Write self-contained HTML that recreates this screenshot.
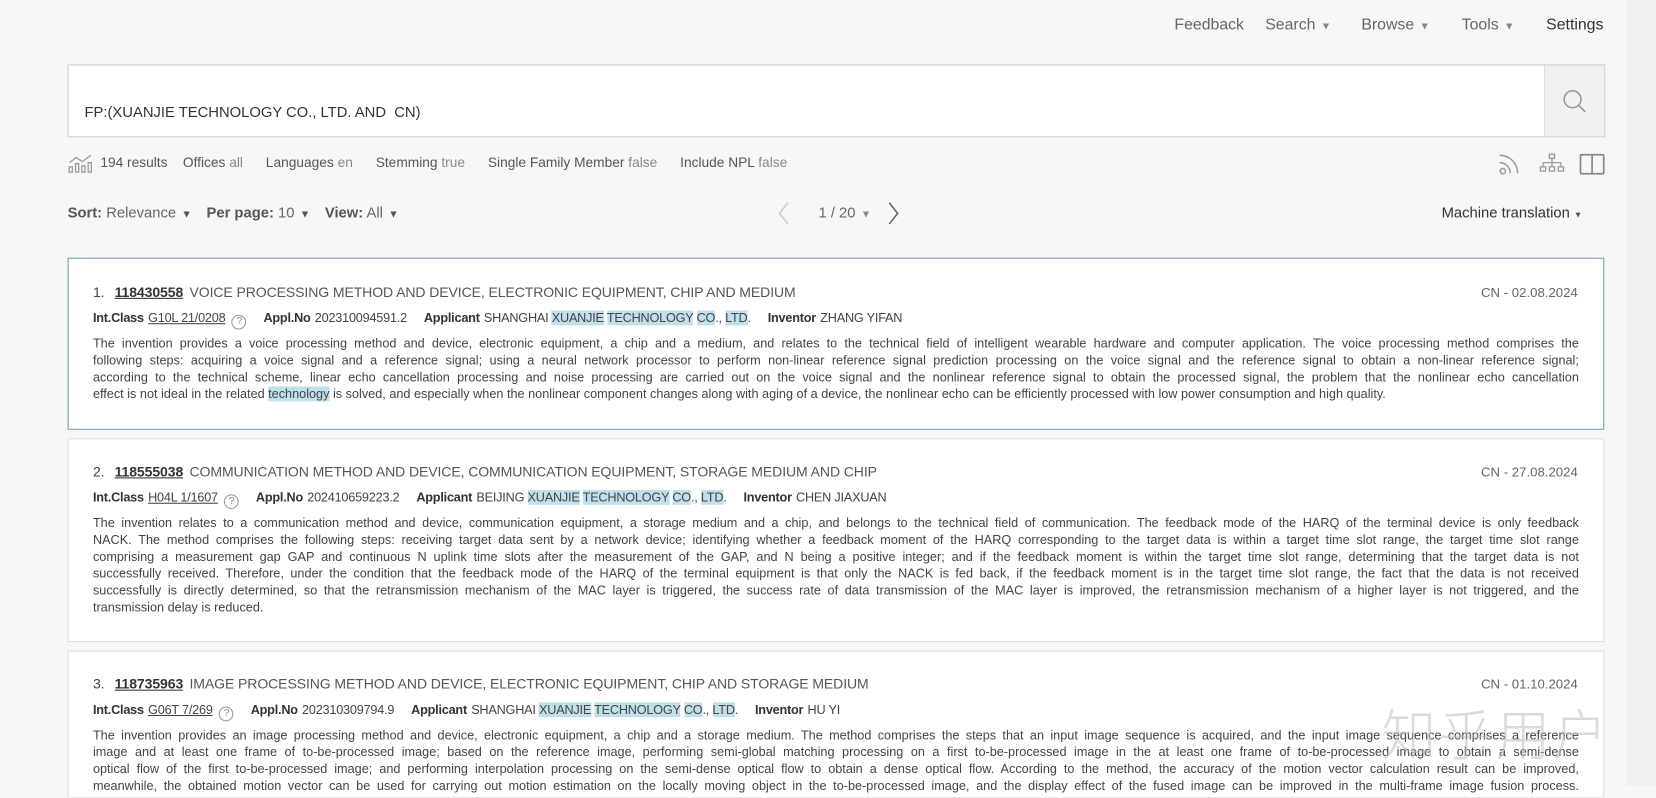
<!DOCTYPE html>
<html><head><meta charset="utf-8"><style>
*{margin:0;padding:0;box-sizing:border-box}
html,body{width:1656px;height:786px;overflow:hidden;background:#f7f7f7}
#w{position:absolute;left:0;top:0;width:1568px;height:744px;transform:scale(1.05612);transform-origin:0 0;font-family:"Liberation Sans Narrow","Liberation Sans",sans-serif;color:#555}
.a{position:absolute;white-space:nowrap}
.nav{top:15px;font-size:15px;color:#666}
.tri{font-size:10px;color:#888;margin-left:5px}
.card{position:absolute;left:64px;width:1455px;background:#fff;border:1px solid #ddd}
.t{position:absolute;left:23px;font-size:13.3px;color:#555;white-space:nowrap;letter-spacing:-0.1px}
.t b{color:#444;font-weight:normal;margin-right:6px}
.t u{color:#333;font-weight:bold;margin-right:6px}
.d{position:absolute;right:24px;font-size:12.5px;color:#666}
.m{position:absolute;left:23px;font-size:12px;color:#444;white-space:nowrap;letter-spacing:-0.2px}
.m .k{color:#333;font-weight:bold;margin-left:16px;margin-right:4px}
.m .k:first-child{margin-left:0}
.q{display:inline-block;width:14px;height:14px;border:1px solid #999;border-radius:50%;font-size:10px;text-align:center;line-height:12px;color:#888;margin-left:6px;vertical-align:-2px}
.h{background:#bfe0ec}
.b{position:absolute;left:23px;width:1407px;font-size:12px;color:#444}
.b div{height:16px;line-height:16px;overflow:hidden;text-align:justify;text-align-last:justify}
.b div.l{text-align-last:left}
</style></head><body><div id="w">
<div class="a nav" style="left:1112px">Feedback</div>
<div class="a nav" style="left:1198px">Search<span class="tri">▼</span></div>
<div class="a nav" style="left:1289px">Browse<span class="tri">▼</span></div>
<div class="a nav" style="left:1384px">Tools<span class="tri">▼</span></div>
<div class="a nav" style="left:1464px;color:#333">Settings</div>

<div style="position:absolute;left:64px;top:61px;width:1456px;height:69px;background:#fff;border:1px solid #ccc"></div>
<div style="position:absolute;left:1462px;top:62px;width:57px;height:67px;background:#f1f1f1;border-left:1px solid #ddd"></div>
<svg style="position:absolute;left:1478px;top:83px" width="26" height="26" viewBox="0 0 26 26"><circle cx="11" cy="11" r="8" fill="none" stroke="#999" stroke-width="1.5"/><path d="M17 17 L23 23" stroke="#999" stroke-width="1.5"/></svg>
<div class="a" style="left:80px;top:98px;font-size:14px;color:#333">FP:(XUANJIE TECHNOLOGY CO., LTD. AND&nbsp; CN)</div>

<svg style="position:absolute;left:64px;top:145px" width="26" height="20" viewBox="0 0 26 20"><g fill="none" stroke="#999" stroke-width="1.2"><path d="M2 9 L8 4 L14 8 L22 2"/><rect x="1.5" y="13" width="3" height="5"/><rect x="7.5" y="10" width="3" height="8"/><rect x="13.5" y="12" width="3" height="6"/><rect x="19.5" y="9" width="3" height="9"/></g></svg>
<div class="a" style="left:95px;top:146px;font-size:13px;color:#555">194 results <span style="margin-left:11px">Offices</span> <span style="color:#888">all</span> <span style="margin-left:18px">Languages</span> <span style="color:#888">en</span> <span style="margin-left:18px">Stemming</span> <span style="color:#888">true</span> <span style="margin-left:18px">Single Family Member</span> <span style="color:#888">false</span> <span style="margin-left:18px">Include NPL</span> <span style="color:#888">false</span></div>
<svg style="position:absolute;left:1418px;top:143px" width="28" height="24" viewBox="0 0 28 24"><g fill="none" stroke="#999" stroke-width="1.4"><circle cx="5" cy="19" r="2.5"/><path d="M2 11 A10 10 0 0 1 12 21"/><path d="M2 4 A17 17 0 0 1 19 21"/></g></svg>
<svg style="position:absolute;left:1457px;top:145px" width="26" height="22" viewBox="0 0 26 22"><g fill="none" stroke="#999" stroke-width="1.2"><rect x="10" y="1" width="5" height="4"/><path d="M12.5 5 V9 M4 9 H21 M4 9 V13 M12.5 9 V13 M21 9 V13"/><rect x="1.5" y="13" width="5" height="4"/><rect x="10" y="13" width="5" height="4"/><rect x="18.5" y="13" width="5" height="4"/></g></svg>
<svg style="position:absolute;left:1495px;top:145px" width="26" height="22" viewBox="0 0 26 22"><g fill="none" stroke="#888" stroke-width="1.6"><rect x="1.5" y="1.5" width="22" height="18" rx="1"/><path d="M12.5 1.5 V19.5"/></g></svg>

<div class="a" style="left:64px;top:193px;font-size:14px;color:#666"><b style="color:#555">Sort:</b> Relevance<span class="tri" style="color:#555">▼</span> <b style="color:#555;margin-left:10px">Per page:</b> 10<span class="tri" style="color:#555">▼</span> <b style="color:#555;margin-left:10px">View:</b> All<span class="tri" style="color:#555">▼</span></div>
<svg style="position:absolute;left:734px;top:190px" width="16" height="24" viewBox="0 0 16 24"><path d="M12 2 L4 12 L12 22" fill="none" stroke="#ccc" stroke-width="1.5"/></svg>
<div class="a" style="left:775px;top:193px;font-size:14px;color:#666">1 / 20<span class="tri">▼</span></div>
<svg style="position:absolute;left:838px;top:190px" width="16" height="24" viewBox="0 0 16 24"><path d="M4 2 L12 12 L4 22" fill="none" stroke="#666" stroke-width="1.5"/></svg>
<div class="a" style="left:1365px;top:193px;font-size:14px;color:#333">Machine translation <span style="font-size:8px;color:#555">▼</span></div>

<div class="card" style="top:244px;height:163px;border:1px solid #6e9ea8">
<div class="t" style="top:24px"><b>1.</b> <u>118430558</u>VOICE PROCESSING METHOD AND DEVICE, ELECTRONIC EQUIPMENT, CHIP AND MEDIUM</div>
<div class="d" style="top:25px">CN - 02.08.2024</div>
<div class="m" style="top:49px"><span class="k">Int.Class</span><u>G10L 21/0208</u><span class="q">?</span><span class="k">Appl.No</span>202310094591.2<span class="k">Applicant</span>SHANGHAI <span class="h">XUANJIE</span> <span class="h">TECHNOLOGY</span> <span class="h">CO</span>., <span class="h">LTD</span>.<span class="k">Inventor</span>ZHANG YIFAN</div>
<div class="b" style="top:72px">
<div>The invention provides a voice processing method and device, electronic equipment, a chip and a medium, and relates to the technical field of intelligent wearable hardware and computer application. The voice processing method comprises the</div>
<div>following steps: acquiring a voice signal and a reference signal; using a neural network processor to perform non-linear reference signal prediction processing on the voice signal and the reference signal to obtain a non-linear reference signal;</div>
<div>according to the technical scheme, linear echo cancellation processing and noise processing are carried out on the voice signal and the nonlinear reference signal to obtain the processed signal, the problem that the nonlinear echo cancellation</div>
<div class="l">effect is not ideal in the related <span class="h">technology</span> is solved, and especially when the nonlinear component changes along with aging of a device, the nonlinear echo can be efficiently processed with low power consumption and high quality.</div>
</div></div>

<div class="card" style="top:415px;height:193px">
<div class="t" style="top:23px"><b>2.</b> <u>118555038</u>COMMUNICATION METHOD AND DEVICE, COMMUNICATION EQUIPMENT, STORAGE MEDIUM AND CHIP</div>
<div class="d" style="top:24px">CN - 27.08.2024</div>
<div class="m" style="top:48px"><span class="k">Int.Class</span><u>H04L 1/1607</u><span class="q">?</span><span class="k">Appl.No</span>202410659223.2<span class="k">Applicant</span>BEIJING <span class="h">XUANJIE</span> <span class="h">TECHNOLOGY</span> <span class="h">CO</span>., <span class="h">LTD</span>.<span class="k">Inventor</span>CHEN JIAXUAN</div>
<div class="b" style="top:71px">
<div>The invention relates to a communication method and device, communication equipment, a storage medium and a chip, and belongs to the technical field of communication. The feedback mode of the HARQ of the terminal device is only feedback</div>
<div>NACK. The method comprises the following steps: receiving target data sent by a network device; identifying whether a feedback moment of the HARQ corresponding to the target data is within a target time slot range, the target time slot range</div>
<div>comprising a measurement gap GAP and continuous N uplink time slots after the measurement of the GAP, and N being a positive integer; and if the feedback moment is within the target time slot range, determining that the target data is not</div>
<div>successfully received. Therefore, under the condition that the feedback mode of the HARQ of the terminal equipment is that only the NACK is fed back, if the feedback moment is in the target time slot range, the fact that the data is not received</div>
<div>successfully is directly determined, so that the retransmission mechanism of the MAC layer is triggered, the success rate of data transmission of the MAC layer is improved, the retransmission mechanism of a higher layer is not triggered, and the</div>
<div class="l">transmission delay is reduced.</div>
</div></div>

<div class="card" style="top:616px;height:140px">
<div class="t" style="top:23px"><b>3.</b> <u>118735963</u>IMAGE PROCESSING METHOD AND DEVICE, ELECTRONIC EQUIPMENT, CHIP AND STORAGE MEDIUM</div>
<div class="d" style="top:24px">CN - 01.10.2024</div>
<div class="m" style="top:48px"><span class="k">Int.Class</span><u>G06T 7/269</u><span class="q">?</span><span class="k">Appl.No</span>202310309794.9<span class="k">Applicant</span>SHANGHAI <span class="h">XUANJIE</span> <span class="h">TECHNOLOGY</span> <span class="h">CO</span>., <span class="h">LTD</span>.<span class="k">Inventor</span>HU YI</div>
<div class="b" style="top:71px">
<div>The invention provides an image processing method and device, electronic equipment, a chip and a storage medium. The method comprises the steps that an input image sequence is acquired, and the input image sequence comprises a reference</div>
<div>image and at least one frame of to-be-processed image; based on the reference image, performing semi-global matching processing on a first to-be-processed image in the at least one frame of to-be-processed image to obtain a semi-dense</div>
<div>optical flow of the first to-be-processed image; and performing interpolation processing on the semi-dense optical flow to obtain a dense optical flow. According to the method, the accuracy of the motion vector calculation result can be improved,</div>
<div>meanwhile, the obtained motion vector can be used for carrying out motion estimation on the locally moving object in the to-be-processed image, and the display effect of the fused image can be improved in the multi-frame image fusion process.</div>
</div></div>

<div class="a" style="left:1308px;top:655px;font-size:52px;color:rgba(190,190,190,0.55);font-family:'Noto Sans CJK SC',sans-serif;font-weight:300;letter-spacing:2px">知乎用户</div>
<div style="position:absolute;left:1540px;top:0;width:28px;height:744px;background:#f0f0f0"></div>
</div></body></html>
